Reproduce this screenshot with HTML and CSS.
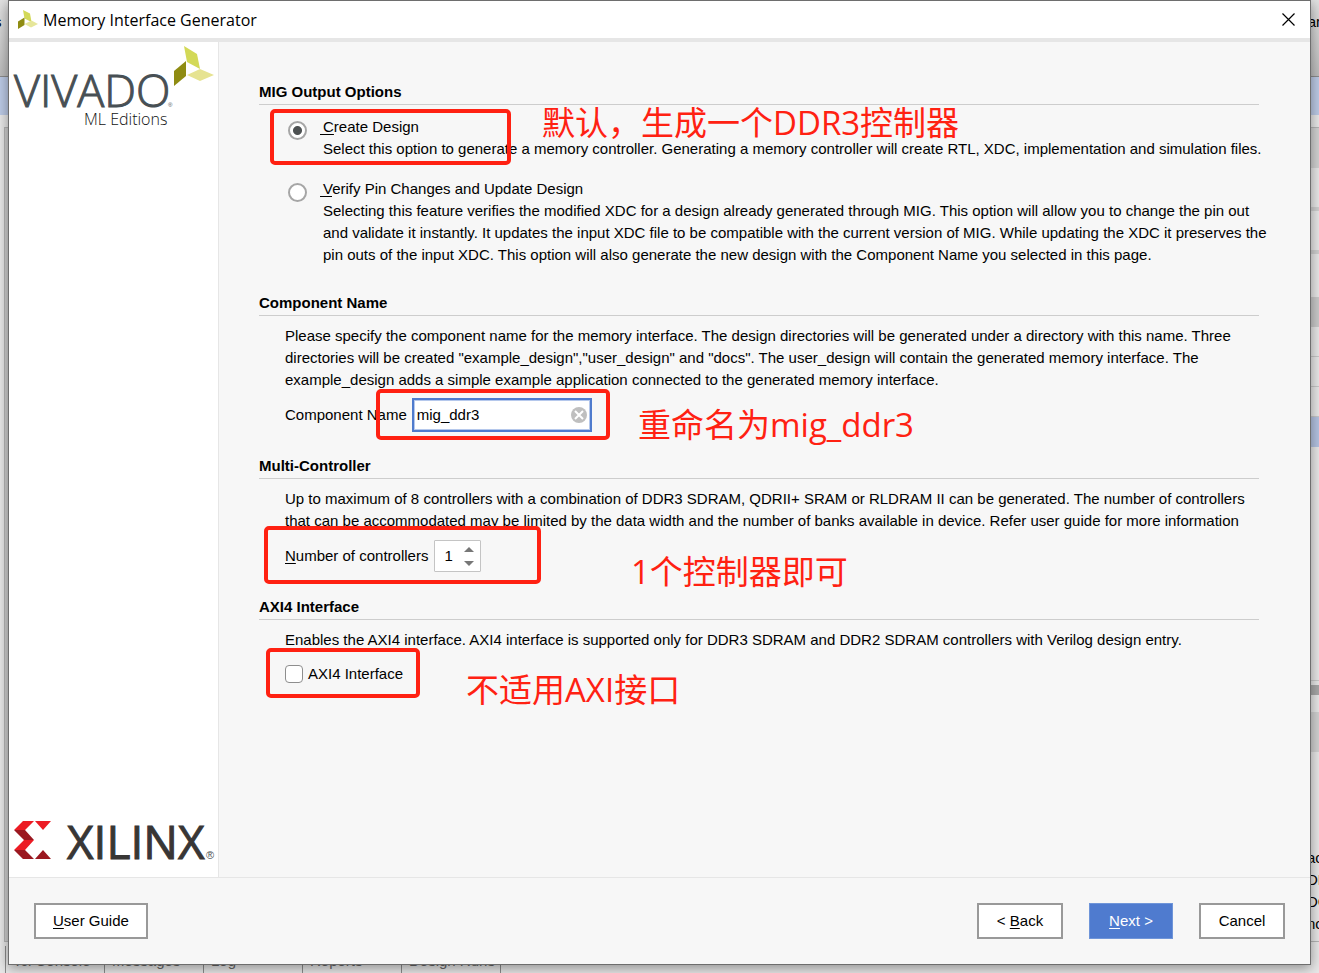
FILE: index.html
```html
<!DOCTYPE html>
<html lang="en">
<head>
<meta charset="utf-8">
<title>Memory Interface Generator</title>
<link rel="stylesheet" href="styles.css">
</head>
<body>
<div class="backdrop" aria-hidden="true">
  <div class="backdrop-bar"><span>s</span><span>ar</span></div>
  <div class="backdrop-status"></div>
  <div class="backdrop-body">
    <div class="backdrop-left"></div>
    <div class="backdrop-right">
      <i class="band-header"></i>
      <i class="band-row"></i>
      <i class="band-row"></i>
      <i class="band-space"></i>
      <i class="band-title"></i>
      <i class="band-line"></i>
      <i class="band-line"></i>
      <i class="band-line"></i>
      <i class="band-selected"></i>
      <i class="band-empty"></i>
      <i class="band-scroll"></i>
      <i class="band-header"></i>
      <p class="backdrop-text">ac<br>DD<br>DC<br>nc</p>
    </div>
  </div>
  <div class="backdrop-tabs"><span>Tcl Console</span><span>Messages</span><span>Log</span><span>Reports</span><span>Design Runs</span></div>
</div>

<div class="dialog" role="dialog" aria-labelledby="dialog-title">
  <header class="titlebar">
    <svg class="app-icon" viewBox="0 0 40 40" aria-hidden="true">
      <path fill="#d3d957" d="M10 0 24 7 27 24 13 17z"/>
      <path fill="#8f8c12" d="M0 23 13 15 13 30 0 38z"/>
      <path fill="#e6e69a" d="M13 28 27 21 40 28 26 35z"/>
    </svg>
    <h1 class="title" id="dialog-title">Memory Interface Generator</h1>
    <button class="close" type="button" aria-label="Close">
      <svg viewBox="0 0 13 13" aria-hidden="true"><path d="M.5.5l12 12M12.5.5l-12 12"/></svg>
    </button>
  </header>

  <div class="content">
    <aside class="sidebar">
      <svg class="vivado" viewBox="0 0 209 86" role="img" aria-label="Vivado ML Editions">
        <path fill="#d3d957" d="M175 4 188 12 191 27 178 20z"/>
        <path fill="#8f8c12" d="M165 29 177 19V34L165 44z"/>
        <path fill="#e6e391" d="M178 33 191 27 205 33 191 39z"/>
        <text class="logo-vivado" x="5" y="65">VIVADO</text>
        <text class="logo-mark" x="159" y="65">®</text>
        <text class="logo-edition" x="75" y="83">ML Editions</text>
      </svg>
      <svg class="xilinx" viewBox="0 0 209 62" role="img" aria-label="Xilinx">
        <path fill="#ec1c24" d="M14 6H25L16 15H5zM26 6H42L34 15zM15 25H25L16 35H5z"/>
        <path fill="#9b1820" d="M5 15H16L25 25H15zM5 35H16L25 44H14zM34 35 42 44H26z"/>
        <text class="logo-xilinx" x="58" y="44">XILINX</text>
        <text class="logo-mark logo-mark-large" x="197" y="44">®</text>
      </svg>
    </aside>

    <main class="main">
      <section class="section">
        <h2 class="heading">MIG Output Options</h2>
        <div class="options">
          <div class="option">
            <input class="radio" type="radio" name="mode" id="create" checked>
            <div class="option-text">
              <label for="create"><span class="lead-key">C</span>reate Design</label>
              <p>Select this option to generate a memory controller. Generating a memory controller will create RTL, XDC, implementation and simulation files.</p>
            </div>
          </div>
          <div class="option">
            <input class="radio" type="radio" name="mode" id="verify">
            <div class="option-text">
              <label for="verify"><span class="lead-key">V</span>erify Pin Changes and Update Design</label>
              <p>Selecting this feature verifies the modified XDC for a design already generated through MIG. This option will allow you to change the pin out<br>and validate it instantly. It updates the input XDC file to be compatible with the current version of MIG. While updating the XDC it preserves the<br>pin outs of the input XDC. This option will also generate the new design with the Component Name you selected in this page.</p>
            </div>
          </div>
        </div>
        <div class="mark mark-create"></div>
        <p class="note note-create" lang="zh-CN">默认，生成一个DDR3控制器</p>
      </section>

      <section class="section">
        <h2 class="heading">Component Name</h2>
        <div class="details">
          <p>Please specify the component name for the memory interface. The design directories will be generated under a directory with this name. Three<br>directories will be created "example_design","user_design" and "docs". The user_design will contain the generated memory interface. The<br>example_design adds a simple example application connected to the generated memory interface.</p>
          <div class="field">
            <label for="component">Component Name</label>
            <div class="textbox">
              <input type="text" id="component" value="mig_ddr3">
              <button class="clear" type="button" aria-label="Clear">
                <svg viewBox="0 0 16 16" aria-hidden="true"><circle cx="8" cy="8" r="8"/><path d="M4 4l8 8M12 4l-8 8"/></svg>
              </button>
            </div>
          </div>
        </div>
        <div class="mark mark-name"></div>
        <p class="note note-name" lang="zh-CN">重命名为mig_ddr3</p>
      </section>

      <section class="section">
        <h2 class="heading">Multi-Controller</h2>
        <div class="details">
          <p>Up to maximum of 8 controllers with a combination of DDR3 SDRAM, QDRII+ SRAM or RLDRAM II can be generated. The number of controllers<br>that can be accommodated may be limited by the data width and the number of banks available in device. Refer user guide for more information</p>
          <div class="field">
            <label for="count"><u>N</u>umber of controllers</label>
            <div class="spinner">
              <input type="number" id="count" value="1" min="1" max="8">
              <div class="steps">
                <button type="button" aria-label="Increase"><svg viewBox="0 0 10 5" aria-hidden="true"><path d="M5 0 10 5H0z"/></svg></button>
                <button type="button" aria-label="Decrease"><svg viewBox="0 0 10 5" aria-hidden="true"><path d="M0 0H10L5 5z"/></svg></button>
              </div>
            </div>
          </div>
        </div>
        <div class="mark mark-count"></div>
        <p class="note note-count" lang="zh-CN">1个控制器即可</p>
      </section>

      <section class="section">
        <h2 class="heading">AXI4 Interface</h2>
        <div class="details">
          <p>Enables the AXI4 interface. AXI4 interface is supported only for DDR3 SDRAM and DDR2 SDRAM controllers with Verilog design entry.</p>
          <div class="field field-check">
            <input class="checkbox" type="checkbox" id="axi">
            <label for="axi">AXI4 Interface</label>
          </div>
        </div>
        <div class="mark mark-axi"></div>
        <p class="note note-axi" lang="zh-CN">不适用AXI接口</p>
      </section>
    </main>
  </div>

  <footer class="footer">
    <button class="button button-guide" type="button"><u>U</u>ser Guide</button>
    <button class="button" type="button">&lt; <u>B</u>ack</button>
    <button class="button button-primary" type="button"><u>N</u>ext &gt;</button>
    <button class="button" type="button">Cancel</button>
  </footer>
</div>
</body>
</html>
```

FILE: styles.css
```css
* { box-sizing: border-box; }

body {
  margin: 0;
  min-height: 100vh;
  display: flex;
  padding: 0 8px 8px;
  position: relative;
  overflow: hidden;
  font: 15px/22px "Liberation Sans", Arial, sans-serif;
  color: #000;
  background: #e8e8e8;
}

h1, h2, p { margin: 0; }
button, input { font: inherit; color: inherit; }
u { text-underline-offset: 2px; }

/* Application window behind the dialog */
.backdrop {
  position: absolute;
  inset: 0;
  display: flex;
  flex-direction: column;
}
.backdrop-bar {
  height: 77px;
  flex: none;
  display: flex;
  justify-content: space-between;
  padding-top: 11px;
  border-bottom: 1px solid #8c8c8c;
  background: linear-gradient(#e2e2e2, #bdbdbd);
}
.backdrop-bar span:first-child { margin-left: -6px; }
.backdrop-bar span:last-child { margin-right: -2px; }
.backdrop-status { height: 38px; flex: none; background: #bccae6; }
.backdrop-body {
  flex: 1;
  display: flex;
  justify-content: space-between;
  padding-top: 12px;
}
.backdrop-left {
  width: 8px;
  margin-left: 4px;
  border: 1px solid #b5b5b5;
  background: #cfcfcf;
}
.backdrop-right {
  width: 12px;
  display: flex;
  flex-direction: column;
  border-top: 1px solid #b5b5b5;
  border-bottom: 1px solid #b5b5b5;
}
.band-header { height: 40px; background: #d2d2d2; }
.band-row { height: 43px; border-bottom: 4px solid #d0d0d0; }
.band-space { height: 43px; }
.band-title { height: 30px; background: #cacaca; }
.band-line { height: 30px; border-bottom: 1px solid #c8c8c8; }
.band-selected { height: 30px; background: #b4c3e2; }
.band-empty { height: 234px; border-bottom: 1px solid #cacaca; }
.band-scroll { height: 10px; margin: 4px 0 17px; background: #a8a8a8; }
.backdrop-text { margin: auto 0 6px; }
.backdrop-tabs {
  height: 27px;
  flex: none;
  display: flex;
  margin: 4px 0 0 5px;
  color: #666;
}
.backdrop-tabs span {
  width: 99px;
  border-left: 1px solid #8c8c8c;
  padding: 4px 7px 0;
  white-space: nowrap;
}
.backdrop-tabs span:last-child { width: 100px; border-right: 1px solid #8c8c8c; }

/* Dialog */
.dialog {
  position: relative;
  flex: 1;
  min-width: 0;
  display: flex;
  flex-direction: column;
  border: 1px solid #6e6e6e;
  background: #f7f7f7;
  box-shadow: 0 3px 12px rgba(0, 0, 0, .4);
}
.titlebar {
  height: 41px;
  flex: none;
  display: flex;
  align-items: center;
  padding: 0 15px 0 9px;
  border-bottom: 4px solid #e6e6e6;
  background: #fff;
}
.app-icon { width: 20px; height: 20px; }
.title {
  margin-left: 5px;
  font: 400 16px/22px "Open Sans", "Noto Sans", sans-serif;
}
.close {
  margin-left: auto;
  padding: 0;
  border: 0;
  background: none;
  line-height: 0;
}
.close svg { width: 13px; height: 13px; stroke: #000; stroke-width: 1.2; }

.content { flex: 1; display: flex; }
.sidebar {
  width: 210px;
  flex: none;
  display: flex;
  flex-direction: column;
  justify-content: space-between;
  border-right: 1px solid #e6e6e6;
  background: #fff;
}
.sidebar svg { width: 209px; display: block; }
.vivado { height: 86px; }
.xilinx { height: 62px; }
.logo-vivado { font: 300 45px "Open Sans", sans-serif; fill: #474f54; stroke: #474f54; }
.logo-xilinx { font: 400 46px "Open Sans", sans-serif; fill: #383635; stroke: #383635; }
.logo-edition { font: 300 16px "Open Sans", sans-serif; fill: #111; }
.logo-mark { font: 6px "Liberation Sans", sans-serif; fill: #474f54; }
.logo-mark-large { font-size: 11px; }

.main { flex: 1; min-width: 0; padding: 39px 51px 0 40px; }
.section { position: relative; }
.heading {
  font-size: 15px;
  line-height: 22px;
  padding-bottom: 1px;
  border-bottom: 1px solid #cdcdcd;
}
.options {
  display: flex;
  flex-direction: column;
  gap: 18px;
  padding: 11px 0 26px 29px;
}
.option { display: flex; align-items: flex-start; gap: 16px; }
.option-text { white-space: nowrap; }
.lead-key {
  margin-left: -3px;
  padding-left: 3px;
  background: linear-gradient(#000, #000) bottom / 100% 1px no-repeat;
}
.radio {
  appearance: none;
  flex: none;
  width: 19px;
  height: 19px;
  margin: 5px 0 0;
  border: 2px solid #a6a6a6;
  border-radius: 50%;
  background: #fff;
}
.radio:checked { background: radial-gradient(circle, #4d5152 4px, #fff 5px); }

.details { padding: 9px 0 23px 26px; white-space: nowrap; }
.field {
  display: flex;
  align-items: center;
  gap: 5px;
  height: 34px;
  margin-top: 7px;
}
.textbox {
  display: flex;
  align-items: center;
  width: 180px;
  height: 34px;
  padding: 0 3px;
  border: 2px solid #4f7bcd;
  box-shadow: inset 0 0 0 1px #b5c8ec;
  background: #fff;
}
.textbox input {
  flex: 1;
  min-width: 0;
  padding: 0;
  border: 0;
  outline: 0;
  background: none;
}
.clear { padding: 0; border: 0; background: none; line-height: 0; }
.clear svg { width: 16px; height: 16px; fill: #bfbfbf; }
.clear path { stroke: #fff; stroke-width: 2; }
.spinner {
  display: flex;
  width: 47px;
  height: 32px;
  margin-left: 1px;
  border: 1px solid #c4c4c4;
  border-radius: 1px;
  background: #fff;
}
.spinner input {
  appearance: textfield;
  flex: 1;
  min-width: 0;
  padding: 0 0 0 9px;
  border: 0;
  outline: 0;
  background: none;
}
.spinner input::-webkit-inner-spin-button { appearance: none; margin: 0; }
.steps {
  display: flex;
  flex-direction: column;
  justify-content: center;
  gap: 9px;
  padding-right: 6px;
}
.steps button { padding: 0; border: 0; background: none; line-height: 0; }
.steps svg { width: 10px; height: 5px; fill: #777; }
.field-check { height: 32px; }
.checkbox {
  appearance: none;
  width: 18px;
  height: 18px;
  margin: 0;
  border: 1px solid #8e8e8e;
  border-radius: 4px;
  background: #fff;
}

/* Annotations drawn over the form */
.mark {
  position: absolute;
  border: 4px solid #ff2112;
  border-radius: 5px;
  pointer-events: none;
}
.mark-create { left: 11px; top: 28px; width: 241px; height: 56px; }
.mark-name { left: 117px; top: 97px; width: 234px; height: 51px; }
.mark-count { left: 5px; top: 71px; width: 277px; height: 58px; }
.mark-axi { left: 7px; top: 52px; width: 154px; height: 50px; }
.note {
  position: absolute;
  white-space: nowrap;
  font: 33px/44px "Open Sans", "Noto Sans CJK SC", sans-serif;
  color: #ff2112;
  pointer-events: none;
}
.note-create { left: 283px; top: 20px; }
.note-name { left: 379px; top: 111px; }
.note-count { left: 372px; top: 95px; }
.note-axi { left: 207px; top: 72px; }

.footer {
  flex: none;
  display: flex;
  gap: 26px;
  padding: 25px;
  border-top: 1px solid #e6e6e6;
}
.button {
  min-width: 86px;
  height: 36px;
  padding: 0 17px;
  border: 2px solid #999;
  background: #fff;
}
.button-guide { margin-right: auto; }
.button-primary { min-width: 84px; border: 1px solid #6f95d9; background: #4f7bcf; color: #fff; }
```
